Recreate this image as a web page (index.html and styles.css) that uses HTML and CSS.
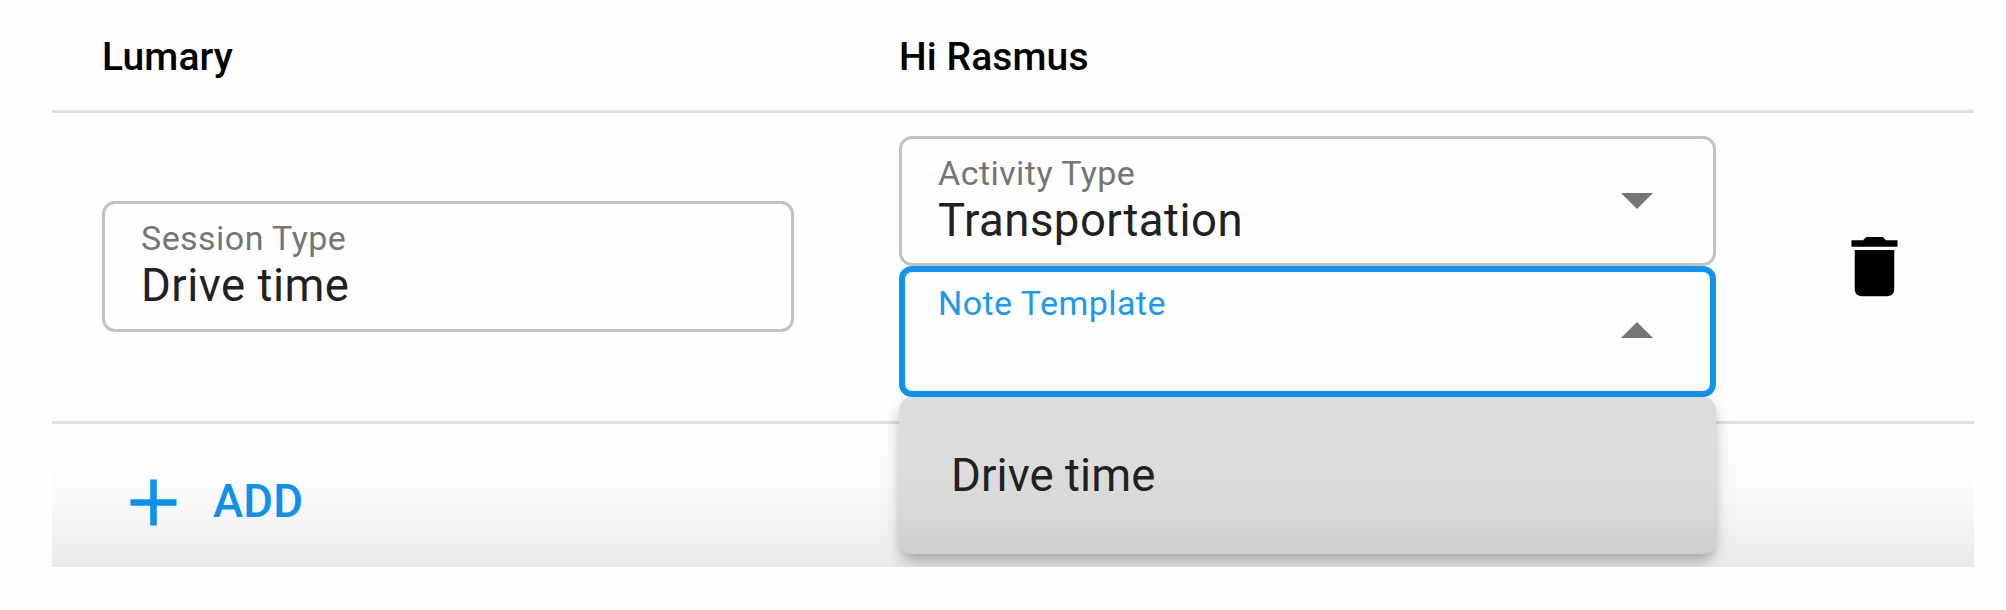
FILE: index.html
```html
<!DOCTYPE html>
<html lang="en">
<head>
    <meta charset="UTF-8">
    <meta name="viewport" content="width=device-width, initial-scale=1.0">
    <title>Session Mapping</title>
    <link rel="stylesheet" href="styles.css">
</head>
<body>
    <main class="mapping-table">
        <div class="row header-row">
            <div class="cell">Lumary</div>
            <div class="cell">Hi Rasmus</div>
        </div>

        <div class="row body-row">
            <div class="cell session-cell">
                <div class="field">
                    <div class="field-text">
                        <span class="label">Session Type</span>
                        <span class="value">Drive time</span>
                    </div>
                </div>
            </div>
            <div class="cell activity-cell">
                <div class="field activity-field">
                    <div class="field-text">
                        <span class="label">Activity Type</span>
                        <span class="value">Transportation</span>
                    </div>
                    <svg class="arrow" viewBox="0 0 10 5"><path d="M0 0l5 5 5-5z"/></svg>
                </div>
                <div class="field focused">
                    <div class="field-text">
                        <span class="label">Note Template</span>
                    </div>
                    <svg class="arrow" viewBox="0 0 10 5"><path d="M0 5l5-5 5 5z"/></svg>
                    <div class="menu">
                        <div class="menu-item">Drive time</div>
                    </div>
                </div>
            </div>
            <div class="cell delete-cell">
                <svg class="icon" viewBox="0 0 24 24"><path d="M6 19c0 1.1.9 2 2 2h8c1.1 0 2-.9 2-2V7H6v12zM19 4h-3.5l-1-1h-5l-1 1H5v2h14V4z"/></svg>
            </div>
        </div>

        <div class="footer-row">
            <svg class="icon" viewBox="0 0 24 24"><path d="M19 13h-6v6h-2v-6H5v-2h6V5h2v6h6v2z"/></svg>
            <span class="add-text">ADD</span>
        </div>
    </main>
</body>
</html>
```

FILE: styles.css
```css
body {
    font-family: Roboto, sans-serif;
    margin: 0;
    background-color: #fefefe;
    color: #000;
}

.mapping-table {
    position: relative;
    box-sizing: border-box;
    width: 1922px;
    height: 567px;
    margin-left: 52px;
    overflow: hidden;
}

/* fade at the bottom edge, covers the open menu too */
.mapping-table::after {
    content: "";
    position: absolute;
    left: 0;
    right: 0;
    bottom: 0;
    height: 137px;
    background: linear-gradient(rgba(0, 0, 0, 0), rgba(0, 0, 0, 0.006) 35%, rgba(0, 0, 0, 0.027) 62%, rgba(0, 0, 0, 0.083));
    pointer-events: none;
}

.row {
    display: grid;
    grid-template-columns: 692px 817px 80px;
    column-gap: 105px;
    align-items: center;
    padding-left: 50px;
    border-bottom: 3px solid #e0e0e0;
}

.header-row {
    height: 110px;
    font-size: 39px;
    font-weight: 500;
    line-height: 46px;
    letter-spacing: 0.1px;
}

.header-row .cell {
    padding-top: 3px;
}

.body-row {
    height: 308px;
}

.session-cell,
.delete-cell {
    padding-bottom: 2px;
}

.activity-cell {
    padding-bottom: 1px;
}

.field {
    position: relative;
    box-sizing: border-box;
    display: flex;
    justify-content: space-between;
    align-items: center;
    height: 131px;
    padding: 0 60px 0 36px;
    border: 3px solid #c2c2c2;
    border-radius: 13px;
}

.activity-field {
    height: 130px;
}

.field-text {
    display: flex;
    flex-direction: column;
    align-self: flex-start;
    padding-top: 14px;
}

.label {
    font-size: 34px;
    line-height: 40px;
    letter-spacing: 0.45px;
    color: #757575;
}

.value {
    font-size: 45.5px;
    line-height: 56px;
    letter-spacing: 0.5px;
    color: #212121;
}

.arrow {
    width: 32px;
    height: 16px;
    fill: #757575;
}

.focused {
    padding: 0 57px 0 33px;
    border: 6px solid #0c94f0;
}

.focused .field-text {
    padding-top: 11px;
}

.focused .label {
    color: #1c98f4;
}

.focused .arrow {
    margin-bottom: 3px;
}

.menu {
    position: absolute;
    top: 125px;
    left: -6px;
    right: -6px;
    height: 157px;
    display: flex;
    align-items: center;
    border-radius: 13px;
    background-color: #ddd;
    box-shadow: 0 6px 13px -3px rgba(0, 0, 0, 0.2),
        0 13px 16px -3px rgba(0, 0, 0, 0.12),
        0 3px 30px 0 rgba(0, 0, 0, 0.08);
}

.menu-item {
    padding-left: 52px;
    font-size: 45.5px;
    letter-spacing: 0.1px;
    color: #212121;
}

.icon {
    display: block;
    width: 79px;
    height: 79px;
}

.delete-cell {
    margin-left: 14px;
}

.footer-row {
    display: flex;
    align-items: center;
    height: 129px;
    padding: 14px 0 0 62px;
    color: #0c94f0;
    fill: #0c94f0;
}

.add-text {
    margin-left: 20px;
    padding-bottom: 2px;
    font-size: 45.5px;
    font-weight: 500;
    letter-spacing: 0.2px;
}
```
